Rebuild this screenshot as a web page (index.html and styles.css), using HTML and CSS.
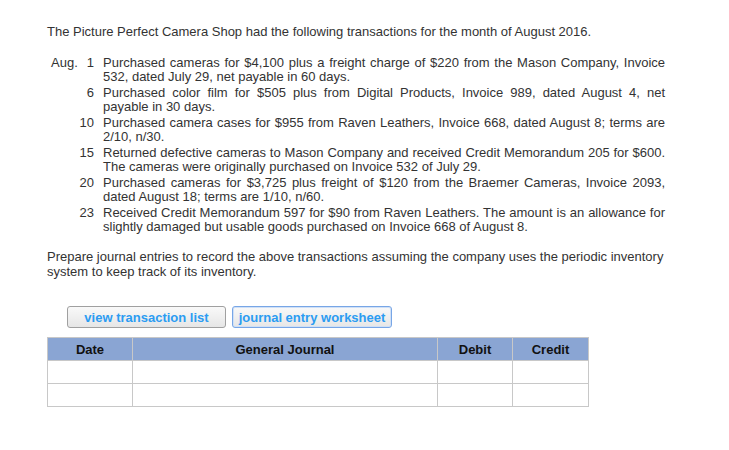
FILE: index.html
```
<!DOCTYPE html>
<html>
<head>
<meta charset="utf-8">
<link rel="stylesheet" href="styles.css">
</head>
<body>
<div class="page">
  <p class="intro">The Picture Perfect Camera Shop had the following transactions for the month of August 2016.</p>
  <div class="items">
    <div class="day"><span class="mon">Aug.</span><span>1</span></div>
    <div class="desc">Purchased cameras for $4,100 plus a freight charge of $220 from the Mason Company, Invoice 532, dated July 29, net payable in 60 days.</div>
    <div class="day"><span>6</span></div>
    <div class="desc">Purchased color film for $505 plus from Digital Products, Invoice 989, dated August 4, net payable in 30 days.</div>
    <div class="day"><span>10</span></div>
    <div class="desc">Purchased camera cases for $955 from Raven Leathers, Invoice 668, dated August 8; terms are 2/10, n/30.</div>
    <div class="day"><span>15</span></div>
    <div class="desc">Returned defective cameras to Mason Company and received Credit Memorandum 205 for $600. The cameras were originally purchased on Invoice 532 of July 29.</div>
    <div class="day"><span>20</span></div>
    <div class="desc">Purchased cameras for $3,725 plus freight of $120 from the Braemer Cameras, Invoice 2093, dated August 18; terms are 1/10, n/60.</div>
    <div class="day"><span>23</span></div>
    <div class="desc">Received Credit Memorandum 597 for $90 from Raven Leathers. The amount is an allowance for slightly damaged but usable goods purchased on Invoice 668 of August 8.</div>
  </div>
  <p class="task">Prepare journal entries to record the above transactions assuming the company uses the periodic inventory system to keep track of its inventory.</p>
  <div class="buttons">
    <button class="btn">view transaction list</button>
    <button class="btn btn-active">journal entry worksheet</button>
  </div>
  <table class="journal">
    <thead>
      <tr><th class="c-date">Date</th><th class="c-gj">General Journal</th><th class="c-dr">Debit</th><th class="c-cr">Credit</th></tr>
    </thead>
    <tbody>
      <tr><td></td><td></td><td></td><td></td></tr>
      <tr><td></td><td></td><td></td><td></td></tr>
    </tbody>
  </table>
</div>
</body>
</html>
```
FILE: styles.css
```
html, body {
  margin: 0;
  padding: 0;
  background: #fff;
}
.page {
  padding: 24px 0 0 47px;
  font-family: "Liberation Sans", Arial, sans-serif;
  font-size: 13px;
  color: #333;
}
.intro {
  margin: 0;
  line-height: 15px;
}
.items {
  margin: 17px 0 0 4px;
  width: 614px;
  display: grid;
  grid-template-columns: 43px 1fr;
  column-gap: 9px;
  row-gap: 2px;
  line-height: 14px;
}
.day {
  display: flex;
  justify-content: flex-end;
}
.day .mon {
  margin-right: auto;
}
.desc {
  text-align: justify;
}
.task {
  margin: 16px 0 0 0;
  width: 620px;
  line-height: 14.6px;
}
.buttons {
  margin: 27px 0 0 20px;
  display: flex;
  gap: 6px;
}
.btn {
  height: 22px;
  width: 159px;
  padding: 0;
  font-family: "Liberation Sans", Arial, sans-serif;
  font-size: 13px;
  font-weight: bold;
  color: #2b9cf2;
  background: linear-gradient(#f9f9f9, #e6e6e6);
  border: 1px solid #a0a0a0;
  border-radius: 3px;
}
.btn-active {
  width: 160px;
  border-color: #78a6e6;
  box-shadow: inset 0 0 0 1px #cfe0f7;
}
.journal {
  margin-top: 9px;
  width: 541px;
  border-collapse: collapse;
  table-layout: fixed;
}
.journal th, .journal td {
  border: 1px solid #c8c8c8;
  height: 22px;
  padding: 0;
}
.journal th {
  background: #8aa5d3;
  color: #111;
  font-weight: bold;
  font-size: 13px;
}
.c-date { width: 84px; }
.c-gj { width: 304px; }
.c-dr { width: 74px; }
.c-cr { width: 75px; }
```
